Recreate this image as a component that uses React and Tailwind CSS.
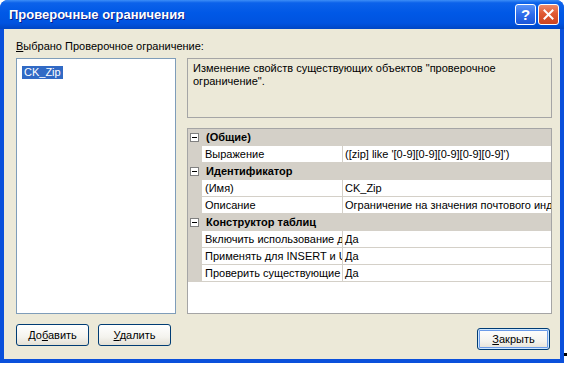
import React from "react";

const rows = [
  { cat: "(Общие)" },
  { name: "Выражение", value: "([zip] like '[0-9][0-9][0-9][0-9][0-9]')" },
  { cat: "Идентификатор" },
  { name: "(Имя)", value: "CK_Zip" },
  { name: "Описание", value: "Ограничение на значения почтового индекса" },
  { cat: "Конструктор таблиц" },
  { name: "Включить использование для репликации", value: "Да" },
  { name: "Применять для INSERT и UPDATE", value: "Да" },
  { name: "Проверить существующие данные при создании или включении", value: "Да" },
];

function XpButton({ children, isDefault, className = "" }) {
  return (
    <button
      className={`h-[22px] w-[73px] rounded-[3px] border border-[#003C74] bg-[linear-gradient(to_bottom,#FFFFFF_0%,#F4F3EE_60%,#E3E0D5_100%)] text-[11px] leading-[20px] text-black ${
        isDefault ? "shadow-[inset_0_0_0_1px_#CEE7FF,inset_0_0_0_2px_#6B9BE8]" : ""
      } ${className}`}
    >
      {children}
    </button>
  );
}

function TitleBar() {
  return (
    <div className="flex h-[29px] shrink-0 items-center rounded-t-[8px] bg-[linear-gradient(to_bottom,#3D8EF7_0%,#0C62EA_10%,#0058E6_45%,#0053E0_80%,#0046C4_100%)] pl-[9px] pr-[5px]">
      <span className="flex-1 text-[13px] font-bold text-white [text-shadow:1px_1px_#0A1E8C]">
        Проверочные ограничения
      </span>
      {/* help */}
      <div className="mr-[2px] flex h-[21px] w-[21px] items-center justify-center rounded-[3px] border border-white bg-[linear-gradient(to_bottom,#5A93F7_0%,#2D6CEB_50%,#1B56D8_100%)] text-[15px] font-bold leading-none text-white">
        ?
      </div>
      {/* close */}
      <div className="flex h-[21px] w-[21px] items-center justify-center rounded-[3px] border border-white bg-[linear-gradient(to_bottom,#EE8A6B_0%,#E05A33_45%,#CC4420_100%)]">
        <svg width="11" height="11" viewBox="0 0 11 11">
          <path d="M1.5 1.5 L9.5 9.5 M9.5 1.5 L1.5 9.5" stroke="white" strokeWidth="2" strokeLinecap="square" />
        </svg>
      </div>
    </div>
  );
}

function PropertyGrid() {
  return (
    <div className="mt-[10px] h-[186px] overflow-hidden border border-[#A5A5A5] bg-white">
      {rows.map((r, i) =>
        r.cat ? (
          <div key={i} className="flex h-[17px] items-center bg-[#D4D0C8]">
            <div className="ml-[2px] flex h-[9px] w-[9px] items-center justify-center border border-[#808080] bg-white">
              <div className="h-px w-[5px] bg-black" />
            </div>
            <span className="ml-[7px] text-[11px] font-bold leading-[17px] text-black">{r.cat}</span>
          </div>
        ) : (
          <div key={i} className="flex h-[17px]">
            <div className="w-[14px] shrink-0 bg-[#D4D0C8]" />
            <div className="w-[141px] shrink-0 overflow-hidden whitespace-nowrap border-b border-r border-[#D4D0C8] pl-[3px] text-[11px] leading-[16px] text-black">
              {r.name}
            </div>
            <div className="flex-1 overflow-hidden whitespace-nowrap border-b border-[#D4D0C8] pl-[2px] text-[11px] leading-[16px] text-black">
              {r.value}
            </div>
          </div>
        )
      )}
    </div>
  );
}

export default function App() {
  return (
    <div className="relative h-[365px] w-[567px] bg-white" style={{ fontFamily: '"Liberation Sans", Arial, sans-serif' }}>
      <div className="flex h-[363px] w-[564px] flex-col rounded-t-[8px] bg-[#0A50DB]">
        <TitleBar />
        <div className="mx-[4px] mb-[4px] flex flex-1 flex-col bg-[#ECE9D8] pl-[12px] pr-[8px]">
          <div className="mt-[11px] h-[13px] text-[11px] leading-[13px] text-black">
            <span className="underline">В</span>ыбрано Проверочное ограничение:
          </div>
          <div className="mt-[5px] flex">
            <div className="h-[256px] w-[160px] shrink-0 border border-[#7F9DB9] bg-white">
              <div className="ml-[5px] mt-[2px] inline-block h-[13px] bg-[#316AC5] px-[2px] text-[11px] leading-[13px] text-white">
                CK_Zip
              </div>
            </div>
            <div className="ml-[11px] flex w-[365px] flex-col">
              <div className="h-[60px] border border-[#A5A5A5] bg-[#ECE9D8] px-[5px] pt-[3px] text-[11px] leading-[13px] text-black">
                Изменение свойств существующих объектов "проверочное ограничение".
              </div>
              <PropertyGrid />
            </div>
          </div>
          <div className="mt-[10px] flex items-start">
            <XpButton>
              До<span className="underline">б</span>авить
            </XpButton>
            <XpButton className="ml-[9px]">
              <span className="underline">У</span>далить
            </XpButton>
            <XpButton isDefault className="ml-auto mr-[2px] mt-[4px]">
              <span className="underline">З</span>акрыть
            </XpButton>
          </div>
        </div>
      </div>
      <div className="absolute left-[564px] top-[353px] h-[3px] w-[3px] bg-black" />
    </div>
  );
}
